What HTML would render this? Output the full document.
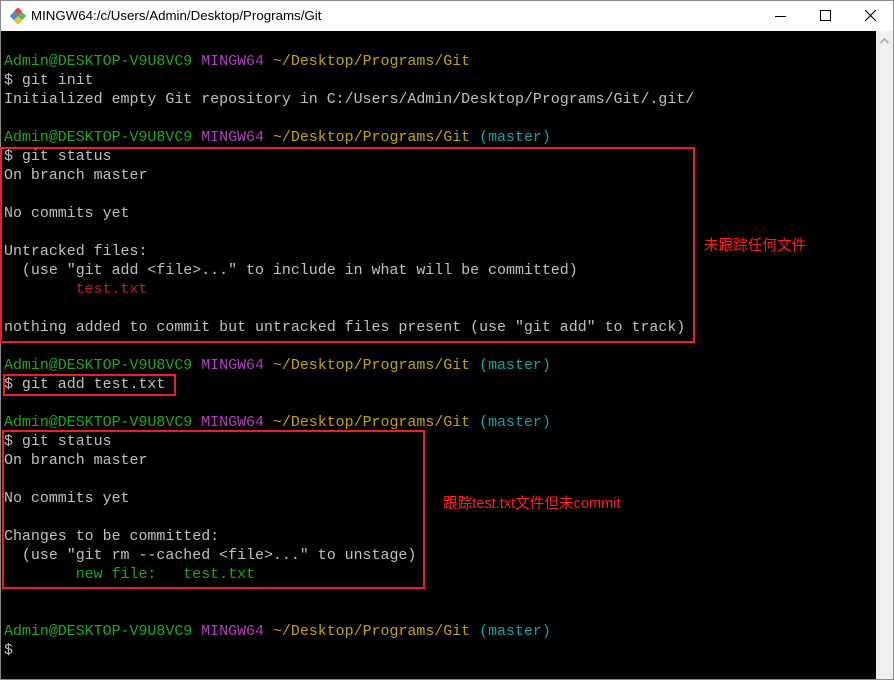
<!DOCTYPE html>
<html><head><meta charset="utf-8"><style>
html,body{margin:0;padding:0;width:894px;height:680px;overflow:hidden;background:#fff;}
.win{position:absolute;left:0;top:0;width:892px;height:678px;border:1px solid #8a8a8a;background:#fff;}
.title{position:absolute;left:0;top:0;width:892px;height:30px;background:#fff;}
.title .t{position:absolute;left:30px;top:7px;font:13.3px "Liberation Sans",sans-serif;color:#000;}
.term{position:absolute;left:0;top:30px;width:875px;height:648px;background:#000;}
.sb{position:absolute;left:875px;top:30px;width:17px;height:648px;background:#f0f0f0;}
pre{position:absolute;left:3px;top:21.5px;margin:0;font:14.95px "Liberation Mono",monospace;line-height:19px;color:#c0c0c0;}
.g{color:#1fa81f}.m{color:#b43fc0}.y{color:#bfa400}.c{color:#14a3a3}.r{color:#c02020}
.box{position:absolute;border:2px solid #e8202a;box-sizing:border-box;}
.ann{position:absolute;color:#ff2020;font:14.6px "Liberation Sans","Noto Sans CJK SC",sans-serif;}
</style></head><body>
<div class="win">
<div class="title">
<svg style="position:absolute;left:9px;top:7px" width="16" height="16" viewBox="0 0 16 16">
<rect x="5" y="0.5" width="6" height="6" transform="rotate(45 8 3.5)" fill="#e04a3a"/>
<rect x="1" y="5" width="6" height="6" transform="rotate(45 4 8)" fill="#3a8ee6"/>
<rect x="9" y="5" width="6" height="6" transform="rotate(45 12 8)" fill="#5cb85c"/>
<rect x="5" y="9.5" width="6" height="6" transform="rotate(45 8 12.5)" fill="#f0c030"/>
</svg>
<div class="t">MINGW64:/c/Users/Admin/Desktop/Programs/Git</div>
<div style="position:absolute;left:774px;top:15px;width:11px;height:1px;background:#000"></div>
<div style="position:absolute;left:819px;top:9px;width:9px;height:9px;border:1px solid #000"></div>
<svg style="position:absolute;left:864px;top:9px" width="11" height="11"><path d="M0 0L11 11M11 0L0 11" stroke="#000" stroke-width="1.1"/></svg>
</div>
<div class="term">
<pre><span class="g">Admin@DESKTOP-V9U8VC9</span> <span class="m">MINGW64</span> <span class="y">~/Desktop/Programs/Git</span>
$ git init
Initialized empty Git repository in C:/Users/Admin/Desktop/Programs/Git/.git/

<span class="g">Admin@DESKTOP-V9U8VC9</span> <span class="m">MINGW64</span> <span class="y">~/Desktop/Programs/Git</span> <span class="c">(master)</span>
$ git status
On branch master

No commits yet

Untracked files:
  (use "git add &lt;file&gt;..." to include in what will be committed)
        <span class="r">test.txt</span>

nothing added to commit but untracked files present (use "git add" to track)

<span class="g">Admin@DESKTOP-V9U8VC9</span> <span class="m">MINGW64</span> <span class="y">~/Desktop/Programs/Git</span> <span class="c">(master)</span>
$ git add test.txt

<span class="g">Admin@DESKTOP-V9U8VC9</span> <span class="m">MINGW64</span> <span class="y">~/Desktop/Programs/Git</span> <span class="c">(master)</span>
$ git status
On branch master

No commits yet

Changes to be committed:
  (use "git rm --cached &lt;file&gt;..." to unstage)
        <span class="g">new file:   test.txt</span>


<span class="g">Admin@DESKTOP-V9U8VC9</span> <span class="m">MINGW64</span> <span class="y">~/Desktop/Programs/Git</span> <span class="c">(master)</span>
$</pre>
</div>
<div class="sb"><svg style="position:absolute;left:4px;top:7px" width="9" height="6"><path d="M0.5 5L4.5 1L8.5 5" stroke="#a0a0a0" stroke-width="1.5" fill="none"/></svg></div>
</div>
<div class="box" style="left:0;top:147px;width:695px;height:196px"></div>
<div class="box" style="left:3px;top:374px;width:173px;height:22px"></div>
<div class="box" style="left:2px;top:430px;width:423px;height:159px"></div>
<div class="ann" style="left:704px;top:234px">未跟踪任何文件</div>
<div class="ann" style="left:443px;top:492px">跟踪test.txt文件但未commit</div>
</body></html>
